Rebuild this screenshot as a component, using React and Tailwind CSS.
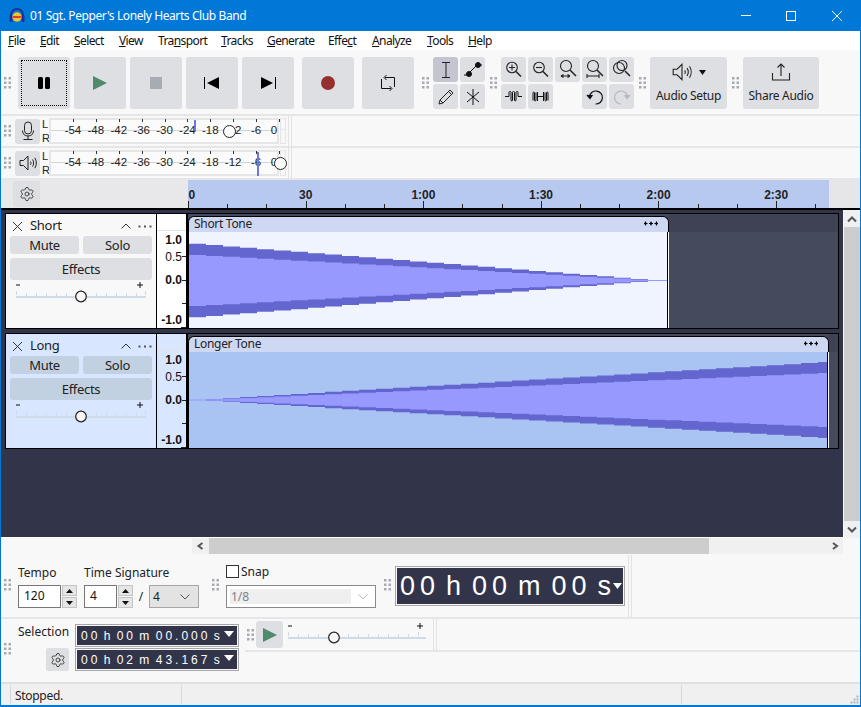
import React from "react";
import { Settings } from "lucide-react";

const sans = "font-['Noto_Sans',sans-serif]";

const Grip = ({ className = "" }) => (
  <svg width="7" height="12" viewBox="0 0 7 12" className={`shrink-0 ${className}`} fill="#a9a9b2">
    <rect x="0" y="0" width="2.5" height="2.5" />
    <rect x="4.5" y="0" width="2.5" height="2.5" />
    <rect x="0" y="4.5" width="2.5" height="2.5" />
    <rect x="4.5" y="4.5" width="2.5" height="2.5" />
    <rect x="0" y="9" width="2.5" height="2.5" />
    <rect x="4.5" y="9" width="2.5" height="2.5" />
  </svg>
);

const Cross = ({ size = 9, color = "#222" }) => (
  <svg width={size} height={size} viewBox="0 0 10 10" fill="none" stroke={color} className="shrink-0">
    <path d="M0 0l10 10M10 0L0 10" />
  </svg>
);

const BigButton = ({ children, focused }) => (
  <div className="w-[52px] h-[52px] rounded-[3px] bg-[#dedfe3] flex items-center justify-center relative shrink-0">
    {focused && <div className="absolute inset-[3px] border border-dotted border-black" />}
    {children}
  </div>
);

const SmallButton = ({ children, active }) => (
  <div className={`w-[25px] h-[25px] rounded-[3px] flex items-center justify-center ${active ? "bg-[#c3c6d0]" : "bg-[#dedfe3]"}`}>
    {children}
  </div>
);

const Glass = ({ children }) => (
  <svg width="21" height="21" viewBox="0 0 21 21" fill="none" stroke="#222" strokeWidth="1.1">
    <circle cx="9" cy="8.5" r="5.3" />
    <path d="M13 12.5l5 5" strokeWidth="1.5" />
    {children}
  </svg>
);

const Speaker = ({ size = 20 }) => (
  <svg width={size} height={size} viewBox="0 0 20 20" fill="none" stroke="#222" strokeWidth="1">
    <path d="M2 7.500h3.500L10 3v14l-4.500-4.500H2z" />
    <path d="M12.500 8.500c.7 1 .7 2.200 0 3.200M14.600 6.500c1.300 2 1.300 5 0 7M16.800 4.800c2 3 2 7.400 0 10.400" />
  </svg>
);

const Menu = () => {
  const items = [
    ["", "F", "ile", 32],
    ["", "E", "dit", 34],
    ["", "S", "elect", 45],
    ["", "V", "iew", 39],
    ["Tra", "n", "sport", 63],
    ["", "T", "racks", 46],
    ["", "G", "enerate", 61],
    ["Effe", "c", "t", 44],
    ["", "A", "nalyze", 55],
    ["", "T", "ools", 41],
    ["", "H", "elp", 40],
  ];
  return (
    <div className="h-[19px] bg-white flex items-center pl-[7px] text-[12px] text-[#111] shrink-0">
      {items.map(([a, b, c, w]) => (
        <span key={a + b + c} style={{ width: w }} className="shrink-0 tracking-[-0.6px]">
          {a}
          <span className="underline">{b}</span>
          {c}
        </span>
      ))}
    </div>
  );
};

const MainToolbar = () => (
  <div className="h-[66px] border-b-2 border-[#e6e6e8] shrink-0 pt-[7px]">
    <div className="h-[52px] flex items-center pl-[3px]">
      <Grip />
      <div className="flex gap-[4px] ml-[7px]">
        <BigButton focused>
          <svg width="14" height="14" viewBox="0 0 14 14" fill="#000">
            <rect x="1" y="1" width="5" height="12" rx="1.500" />
            <rect x="8" y="1" width="5" height="12" rx="1.500" />
          </svg>
        </BigButton>
        <BigButton>
          <svg width="16" height="16" viewBox="0 0 16 16" fill="#4f8a6b"><path d="M1 1l14 7-14 7z" /></svg>
        </BigButton>
        <BigButton>
          <div className="w-[12px] h-[12px] bg-[#a7abb3]" />
        </BigButton>
        <BigButton>
          <svg width="16" height="14" viewBox="0 0 16 14" fill="#000"><rect x="0" y="1" width="1" height="12" /><path d="M15 1v12L3 7z" /></svg>
        </BigButton>
        <BigButton>
          <svg width="16" height="14" viewBox="0 0 16 14" fill="#000"><rect x="15" y="1" width="1" height="12" /><path d="M1 1v12l12-6z" /></svg>
        </BigButton>
      </div>
      <div className="flex gap-[8px] ml-[8px]">
        <BigButton>
          <div className="w-[14px] h-[14px] rounded-full bg-[#963030]" />
        </BigButton>
        <BigButton>
          <svg width="16" height="18" viewBox="0 0 16 18" fill="none" stroke="#111" strokeWidth="1">
            <path d="M5 3.500H14.500V13M11 14.500H1.500V5" />
            <path d="M6.500 1L4 3.500 6.500 6M9.500 12l2.500 2.500L9.500 17" />
          </svg>
        </BigButton>
      </div>
      <Grip className="ml-[8px]" />
      <div className="grid grid-cols-2 gap-[2px] ml-[4px]">
        <SmallButton active>
          <svg width="12" height="20" viewBox="0 0 12 20" fill="none" stroke="#222" strokeWidth="1"><path d="M2 2.500h8M2 17.500h8M6 2.500v15" /></svg>
        </SmallButton>
        <SmallButton>
          <svg width="22" height="18" viewBox="0 0 22 18" fill="none" stroke="#111"><path d="M2 14h3l10-10h5" /><circle cx="7" cy="13" r="2.500" fill="#111" /><circle cx="16" cy="4" r="2.500" fill="#111" /></svg>
        </SmallButton>
        <SmallButton>
          <svg width="18" height="18" viewBox="0 0 18 18" fill="none" stroke="#222"><path d="M2 16l1-4L13 2l3 3L6 15zM11.500 3.500l3 3M3 12l3 3" /></svg>
        </SmallButton>
        <SmallButton>
          <svg width="16" height="16" viewBox="0 0 16 16" fill="none" stroke="#111"><path d="M8 0v16M2 3l12 10M14 3L2 13" /></svg>
        </SmallButton>
      </div>
      <Grip className="ml-[5px]" />
      <div className="grid grid-cols-5 gap-[2px] ml-[4px]">
        <SmallButton><Glass><path d="M6 8.500h6M9 5.500v6" /></Glass></SmallButton>
        <SmallButton><Glass><path d="M6 8.500h6" /></Glass></SmallButton>
        <SmallButton>
          <svg width="23" height="23" viewBox="0 0 23 23" fill="none" stroke="#222" strokeWidth="1.100"><circle cx="10" cy="8" r="5.500" /><path d="M14 12l6 6" strokeWidth="1.500" /><path d="M5 18h9M5 18l2.500-1.500M5 18l2.500 1.500M14 18l-2.500-1.500M14 18l-2.500 1.500" /></svg>
        </SmallButton>
        <SmallButton>
          <svg width="23" height="23" viewBox="0 0 23 23" fill="none" stroke="#222" strokeWidth="1.100"><circle cx="10" cy="8" r="5.500" /><path d="M14 12l6 6" strokeWidth="1.500" /><path d="M4 16v4M16 16v4M4 18h12" /></svg>
        </SmallButton>
        <SmallButton>
          <svg width="23" height="23" viewBox="0 0 23 23" fill="none" stroke="#222" strokeWidth="1.100"><circle cx="9" cy="10" r="5.500" /><circle cx="12" cy="7.500" r="5" /><path d="M15 13l5 5" strokeWidth="1.500" /></svg>
        </SmallButton>
        <SmallButton>
          <svg width="17" height="15" viewBox="0 0 17 15" fill="none" stroke="#111"><path d="M0 7.500h4M13 7.500h4" /><path d="M4 7.500V3.500a1 1 0 0 1 2 0v8a1 1 0 0 0 1.500 0v-8a1 1 0 0 1 2 0v8a1 1 0 0 0 1.500 0v-8a1 1 0 0 1 2 0v4" /></svg>
        </SmallButton>
        <SmallButton>
          <svg width="17" height="15" viewBox="0 0 17 15" fill="none" stroke="#111"><path d="M1 3.500a1 1 0 0 1 1.500 0v8a1 1 0 0 0 1.500 0v-8M1 3.500v8M5.500 3v9M5.500 7.500h6M11.500 3v9M13 3.500v8a1 1 0 0 0 1.500 0v-8a1 1 0 0 1 1.500 0v8" /></svg>
        </SmallButton>
        <div />
        <SmallButton>
          <svg width="18" height="18" viewBox="0 0 18 18" fill="none" stroke="#111" strokeWidth="1.200"><path d="M3.500 8.500A6.500 6.500 0 1 1 9.500 16" /><path d="M1 7l3 3.500L6.500 7" fill="#111" /></svg>
        </SmallButton>
        <SmallButton>
          <svg width="18" height="18" viewBox="0 0 18 18" fill="none" stroke="#b9b9bd" strokeWidth="1.200"><path d="M14.500 8.500A6.500 6.500 0 1 0 8.500 16" /><path d="M17 7l-3 3.500L11.500 7" fill="#b9b9bd" /></svg>
        </SmallButton>
      </div>
      <Grip className="ml-[5px]" />
      <div className="w-[77px] h-[52px] rounded-[3px] bg-[#dedfe3] ml-[4px] flex flex-col items-center">
        <div className="flex items-center gap-[6px] mt-[4px] h-[22px]">
          <Speaker size={22} />
          <svg width="7" height="5" viewBox="0 0 7 5" fill="#111"><path d="M0 0h7L3.500 5z" /></svg>
        </div>
        <div className="text-[12px] text-[#222] mt-[4px] whitespace-nowrap tracking-[-0.3px]">Audio Setup</div>
      </div>
      <Grip className="ml-[5px]" />
      <div className="w-[76px] h-[52px] rounded-[3px] bg-[#dedfe3] ml-[4px] flex flex-col items-center">
        <svg width="20" height="20" viewBox="0 0 20 20" fill="none" stroke="#222" strokeWidth="1.100" className="mt-[5px]">
          <path d="M1.500 11v7h17v-7M10 14V2M6.500 5.500L10 2l3.500 3.500" />
        </svg>
        <div className="text-[12px] text-[#222] mt-[5px] whitespace-nowrap tracking-[-0.3px]">Share Audio</div>
      </div>
    </div>
  </div>
);

const scale = ["-54", "-48", "-42", "-36", "-30", "-24", "-18", "-12", "-6", "0"];

const Meter = ({ children, Icon }) => (
  <div className="h-[32px] flex items-center pl-[3px] border-b-2 border-[#e6e6e8] shrink-0">
    <Grip />
    <div className="w-[25px] h-[25px] rounded-[3px] bg-[#dedfe3] ml-[4px] flex items-center justify-center shrink-0">
      <Icon />
    </div>
    <div className="w-[7px] ml-[2px] flex flex-col text-[11px] leading-[14px] text-[#222] font-['Liberation_Sans',sans-serif]">
      <span>L</span>
      <span>R</span>
    </div>
    <div className="relative w-[230px] h-[26px] border-2 border-[#e6e6e8] bg-[#fbfbfb]">
      <div className="absolute left-0 right-0 top-[10px] h-[1px] bg-[#d4d4d6]" />
      <div className="absolute inset-0 flex pl-[10.5px] items-center font-['Liberation_Sans',sans-serif] text-[11.5px] text-[#222]">
        {scale.map((s) => (
          <span key={s} className={`w-[22.9px] shrink-0 text-center ${s === "0" ? "-translate-x-[5px]" : ""}`}>{s}</span>
        ))}
      </div>
      <div className="absolute inset-x-0 top-[-1px] pl-[22px] flex">
        {scale.map((s) => (
          <span key={s} className="w-[22.9px] shrink-0"><span className="block w-[1px] h-[3px] bg-[#333]" /></span>
        ))}
      </div>
      {children}
    </div>
    <div className="w-[6px] h-[26px] ml-[1px] border border-[#e6e6e8] flex flex-col">
      <div className="h-[11px] border-b border-[#e6e6e8]" />
    </div>
    <div className="w-[4px] h-[32px] ml-[2px] border-x border-[#e2e2e4]" />
  </div>
);

const Mic = () => (
  <svg width="18" height="20" viewBox="0 0 18 20" fill="none" stroke="#222" strokeWidth="1">
    <rect x="5.500" y="1" width="7" height="12" rx="3.500" />
    <path d="M3.500 9.500c0 3.500 2 5.500 5.500 5.500s5.500-2 5.500-5.500M9 15v3M4.500 18.500h9" />
  </svg>
);

const TimeRuler = () => {
  const ticks = Array.from({ length: 17 }, (_, i) => i);
  return (
    <div className="h-[30px] flex shrink-0 border-b-2 border-black">
      <div className="w-[187px] bg-[#e8e8ea] pl-[12px] pt-[1px]">
        <div className="w-[27px] h-[26px] rounded-[3px] bg-[#dedfe3] flex items-center justify-center">
          <Settings size={16} strokeWidth={1.2} color="#222" />
        </div>
      </div>
      <div className="relative w-[641px] bg-[#b8c9f0] flex font-['Liberation_Sans',sans-serif] font-bold text-[12px] text-[#222] pt-[6px]">
        <span className="w-[59px] pl-[0.5px] shrink-0">0</span>
        {["30", "1:00", "1:30", "2:00"].map((t) => (
          <span key={t} className="w-[117.6px] text-center shrink-0">{t}</span>
        ))}
        <span className="flex-1 text-center pl-[6px]">2:30</span>
        <svg width="641" height="28" className="absolute left-0 top-0" stroke="#222">
          {ticks.map((i) => (
            <path key={i} d={`M${Math.round(i * 39.2) + 0.5} ${i % 3 === 0 ? 21 : 24}V28`} />
          ))}
        </svg>
      </div>
      <div className="flex-1 bg-[#e6e6e8]" />
    </div>
  );
};

const Dots = ({ color = "#333", plus }) => (
  <svg width="14" height="5" viewBox="0 0 14 5" fill={color} className="shrink-0">
    {[1.5, 7, 12.5].map((x) => (
      <g key={x}>
        <rect x={x - 1} y="1.500" width="2" height="2" />
        {plus && <rect x={x - 2} y="2" width="4" height="1" />}
        {plus && <rect x={x - 0.5} y="0.500" width="1" height="4" />}
      </g>
    ))}
  </svg>
);

const Slider = ({ width = 130, thumb = 65, color = "#cfdbe8" }) => {
  const ticks = Array.from({ length: 14 }, (_, i) => i);
  return (
    <svg width={width} height="24" viewBox={`0 0 ${width} 24`} className="shrink-0">
      <path d="M0 3h4" stroke="#111" />
      <path d={`M${width - 9} 3h6M${width - 6} 0v6`} stroke="#111" />
      <rect x="0" y="14" width={width} height="2" fill={color} />
      {ticks.map((i) => (
        <rect key={i} x={Math.min(i * 10, width - 1)} y={i === 0 || i === 13 ? 9 : 11} width="1" height="4" fill={color} />
      ))}
      <circle cx={thumb} cy="14.500" r="5.300" fill="#f8f8f8" stroke="#222" strokeWidth="1.200" />
    </svg>
  );
};

const envelope = (width, fn, step = 17) => {
  const top = [];
  const bottom = [];
  for (let x = 0; x < width; x += step) {
    const end = Math.min(x + step, width);
    const h = fn(x + step / 2);
    top.push(`${x},${-h}`, `${end},${-h}`);
    bottom.unshift(`${end},${h}`, `${x},${h}`);
  }
  return [...top, ...bottom].join(" ");
};

const Wave = ({ width, outer, inner, center }) => (
  <svg width={width} height="96" className="absolute left-0 top-0">
    <g transform={`translate(0 ${center})`}>
      <polygon points={envelope(width, outer)} fill="#6466d0" />
      <polygon points={envelope(width, inner)} fill="#9899ff" />
      <rect x="0" y="-0.500" width={width} height="1" fill="#9899ff" />
    </g>
  </svg>
);

const TrackButton = ({ children, className }) => (
  <div className={`rounded-[3px] flex items-center justify-center pt-[2px] text-[13px] text-[#222] tracking-[-0.3px] ${className}`}>{children}</div>
);

const Track = ({ name, clip, selected, clipWidth, outer, inner, center }) => {
  const btn = selected ? "bg-[#c2d1e2]" : "bg-[#dedfe3]";
  return (
    <div className="h-[116px] w-[834px] ml-[4px] border border-black flex bg-[#454a5d]">
      <div className={`w-[151px] border-r border-black px-[4px] shrink-0 ${selected ? "bg-[#d9e6ff]" : "bg-[#f8f8f8]"}`}>
        <div className="h-[22px] flex items-center pl-[3px] pt-[2px] text-[13px] text-[#222]">
          <Cross />
          <span className="ml-[8px] tracking-[-0.3px]">{name}</span>
          <svg width="10" height="6" viewBox="0 0 10 6" fill="none" stroke="#333" className="ml-auto mr-[7px]"><path d="M.5 5.500L5 1l4.500 4.500" /></svg>
          <Dots color="#555" />
        </div>
        <div className="flex gap-[4px]">
          <TrackButton className={`w-[69px] h-[18px] ${btn}`}>Mute</TrackButton>
          <TrackButton className={`w-[69px] h-[18px] ${btn}`}>Solo</TrackButton>
        </div>
        <TrackButton className={`h-[22px] mt-[4px] ${btn}`}>Effects</TrackButton>
        <div className="mt-[2px] pl-[6px]"><Slider /></div>
      </div>
      <div className={`w-[31px] border-r-2 border-black shrink-0 flex flex-col ${selected ? "bg-[#d9e6ff]" : "bg-white"}`}>
        <div className="h-[17px] border-b border-[#e2e2e4] shrink-0" />
        <div className="flex-1 relative pt-[1px] text-[12px] leading-[16px] text-right pr-[4px] font-['Liberation_Sans',sans-serif] text-[#111]">
          <div className="font-bold">1.0</div>
          <div className="mt-[1px]">0.5</div>
          <div className="mt-[7px] font-bold">0.0</div>
          <div className="mt-[24px] font-bold">-1.0</div>
          <svg width="5" height="98" className="absolute right-0 top-0" stroke="#222">
            <path d="M1 25.500h4M1 49.500h4M1 72.500h4M0 96.500h5" />
          </svg>
        </div>
      </div>
      <div className="pt-[2px] shrink-0 flex flex-col" style={{ width: clipWidth }}>
        <div className="h-[16px] rounded-t-[6px] border-t border-l border-r border-black bg-[#cfd8f3] flex items-center justify-between pl-[5px] pr-[10px] pb-[2px] text-[12px] text-[#222] shrink-0">
          <span className="tracking-[-0.3px]">{clip}</span>
          <Dots color="#000" plus />
        </div>
        <div className="h-[96px] border-r border-white">
          <div className={`relative h-full border-x border-black ${selected ? "bg-[#a9c3f2]" : "bg-[#f0f4ff]"}`}>
            <Wave width={clipWidth - 3} outer={outer} inner={inner} center={center} />
          </div>
        </div>
      </div>
      <div className="flex-1">
        <div className="h-[18px] bg-[#3f4154]" />
      </div>
    </div>
  );
};

const Chevron = ({ d, className }) => (
  <svg width="10" height="8" viewBox="0 0 10 8" fill="none" stroke="#555" strokeWidth="2" className={className}><path d={d} /></svg>
);

const TrackArea = () => (
  <div className="flex h-[328px] shrink-0">
    <div className="w-[842px] bg-[#32354a] pt-[3px] flex flex-col gap-[4px] border-b border-white">
      <Track
        name="Short"
        clip="Short Tone"
        clipWidth={481}
        outer={(x) => Math.max(37.5 * (1 - x / 468), 0)}
        inner={(x) => Math.max(26 * (1 - x / 468), 0)}
        center={48.5}
      />
      <Track
        selected
        name="Long"
        clip="Longer Tone"
        clipWidth={641}
        outer={(x) => Math.max((38 * (x - 10)) / 629, 0)}
        inner={(x) => Math.max((27 * (x - 10)) / 629, 0)}
        center={48}
      />
    </div>
    <div className="w-[16px] ml-[1px] bg-[#f0f0f0] flex flex-col items-center shrink-0">
      <div className="h-[17px] flex items-center"><Chevron d="M1 6.500l4-4 4 4" /></div>
      <div className="flex-1 w-full bg-[#cdcdcd]" />
      <div className="h-[17px] flex items-center"><Chevron d="M1 1.500l4 4 4-4" /></div>
    </div>
  </div>
);

const HScroll = () => (
  <div className="h-[17px] flex pl-[191px] shrink-0">
    <div className="w-[651px] bg-[#f0f0f0] flex items-center h-[16px]">
      <div className="w-[17px] flex justify-center"><Chevron d="M6.500 1l-4 3 4 3" /></div>
      <div className="w-[500px] h-full bg-[#cdcdcd]" />
      <div className="ml-auto w-[17px] flex justify-center"><Chevron d="M3 1l4 3-4 3" /></div>
    </div>
  </div>
);

const Spin = () => (
  <div className="w-[15px] h-[23px] flex flex-col gap-[1px] ml-[1px]">
    {["M0 4L3.500 0 7 4z", "M0 0h7L3.500 4z"].map((d) => (
      <div key={d} className="flex-1 bg-[#e6e6e6] border border-[#c4c4c4] flex items-center justify-center">
        <svg width="7" height="4" viewBox="0 0 7 4" fill="#111"><path d={d} /></svg>
      </div>
    ))}
  </div>
);

const Caret = ({ color = "#555" }) => (
  <svg width="10" height="6" viewBox="0 0 10 6" fill="none" stroke={color}><path d="M.5.5L5 5 9.500.5" /></svg>
);

const Clock = ({ text }) => (
  <div className="w-[164px] h-[23px] border border-[#a6a6aa] p-[1px]">
    <div className="h-full bg-[#32354a] flex items-center justify-between pl-[4px] pr-[3px] text-white font-['Liberation_Sans',sans-serif] text-[12px] tracking-[3px] [word-spacing:-3px] whitespace-pre">
      <span>{text}</span>
      <svg width="10" height="6" viewBox="0 0 10 6" fill="#fff" className="mb-[4px] -ml-[3px]"><path d="M0 0h10L5 6z" /></svg>
    </div>
  </div>
);

const TimeToolbar = () => (
  <div className="h-[64px] flex pl-[3px] border-b-2 border-[#e6e6e8] shrink-0 text-[12px] text-[#222]">
    <Grip className="self-center -mt-[2px]" />
    <div className="ml-[7px] pt-[9px]">
      <div className="h-[21px]">Tempo</div>
      <div className="flex">
        <div className="w-[43px] h-[23px] border border-[#777] bg-white pl-[5px] leading-[20px] text-[#111]">120</div>
        <Spin />
      </div>
    </div>
    <div className="ml-[7px] pt-[9px]">
      <div className="h-[21px] whitespace-nowrap">Time Signature</div>
      <div className="flex items-center">
        <div className="w-[33px] h-[23px] border border-[#777] bg-white pl-[5px] leading-[20px] text-[#111]">4</div>
        <Spin />
        <span className="w-[16px] text-center">/</span>
        <div className="w-[50px] h-[23px] border border-[#a6a6a6] bg-[#e3e3e3] pl-[3px] pr-[8px] flex items-center justify-between">
          <span>4</span>
          <Caret />
        </div>
      </div>
    </div>
    <Grip className="self-center ml-[13px] -mt-[2px]" />
    <div className="ml-[7px] pt-[10px] w-[150px]">
      <div className="h-[20px] flex items-start">
        <div className="w-[13px] h-[13px] border border-[#333] bg-white" />
        <span className="ml-[2px] leading-[13px]">Snap</span>
      </div>
      <div className="h-[23px] border border-[#8a8a8a] bg-white p-[3px] flex items-center">
        <div className="flex-1 h-full bg-[#efefef] pl-[1px] text-[#808088] leading-[15px]">1/8</div>
        <span className="ml-[7px] mr-[4px]"><Caret color="#bbb" /></span>
      </div>
    </div>
    <Grip className="self-center ml-[8px] -mt-[2px]" />
    <div className="w-[230px] h-[40px] ml-[4px] mt-[11px] border border-[#a6a6aa] p-[1px]">
      <div className="h-full bg-[#32354a] flex items-center justify-between pl-[3px] pr-[1px] text-white font-['Liberation_Sans',sans-serif] text-[27px] tracking-[5px] [word-spacing:-6.500px] whitespace-pre">
        <span>00 h 00 m 00 s</span>
        <svg width="9" height="6" viewBox="0 0 9 6" fill="#fff" className="-ml-[5px] shrink-0"><path d="M0 0h9L4.500 6z" /></svg>
      </div>
    </div>
    <div className="w-[4px] ml-[3px] border-x border-[#e2e2e4]" />
  </div>
);

const SelectionToolbar = () => (
  <div className="h-[65px] flex pl-[3px] shrink-0 text-[12px] text-[#222] border-b-2 border-[#e0e0e0]">
    <Grip className="self-center -mt-[3px]" />
    <div className="ml-[7px] w-[57px] shrink-0 flex flex-col pt-[4px]">
      <div className="h-[25px]">Selection</div>
      <div className="w-[23px] h-[23px] ml-[28px] bg-[#dedfe3] rounded-[2px] flex items-center justify-center">
        <Settings size={16} strokeWidth={1.2} color="#222" />
      </div>
    </div>
    <div className="flex flex-col gap-[1px] pt-[5px]">
      <Clock text="00 h 00 m 00.000 s" />
      <Clock text="00 h 02 m 43.167 s" />
    </div>
    <div className="flex-1 ml-[6px]">
      <div className="h-[33px] border-b-2 border-[#e6e6e8] flex items-center pl-[2px]">
        <Grip />
        <div className="w-[27px] h-[27px] ml-[2px] rounded-[3px] bg-[#dedfe3] flex items-center justify-center">
          <svg width="16" height="16" viewBox="0 0 16 16" fill="#4f8a6b"><path d="M1 1l14 7-14 7z" /></svg>
        </div>
        <div className="ml-[5px]"><Slider width={138} thumb={46} /></div>
        <div className="w-[4px] h-[31px] ml-[7px] border-x border-[#e2e2e4]" />
      </div>
    </div>
  </div>
);

const StatusBar = () => (
  <div className="h-[21px] bg-[#f0f0f0] flex text-[12px] text-[#222] relative shrink-0">
    <div className="w-[10px] border-r border-[#d8d8d8] my-[1px]" />
    <div className="w-[171px] border-r border-[#d8d8d8] pl-[4px] my-[1px] leading-[21px] tracking-[-0.3px]">Stopped.</div>
    <div className="w-[500px] border-r border-[#d8d8d8] my-[1px]" />
    <svg width="9" height="9" viewBox="0 0 9 9" fill="#b5b5b5" className="absolute right-[1px] bottom-[1px]">
      <rect x="6.500" y="0.500" width="2" height="2" />
      <rect x="3.500" y="3.500" width="2" height="2" />
      <rect x="6.500" y="3.500" width="2" height="2" />
      <rect x="0.500" y="6.500" width="2" height="2" />
      <rect x="3.500" y="6.500" width="2" height="2" />
      <rect x="6.500" y="6.500" width="2" height="2" />
    </svg>
  </div>
);

export default function App() {
  return (
    <div className={`w-[861px] h-[707px] overflow-hidden bg-[#f8f8f8] border-x border-b-2 border-[#0078d7] flex flex-col ${sans}`}>
      <div className="h-[31px] bg-[#0078d7] flex items-center text-white text-[12px] shrink-0">
        <svg width="16" height="15" viewBox="0 0 16 15" className="ml-[8px] shrink-0">
          <path d="M2 10V7a6 6 0 0 1 12 0v3" fill="none" stroke="#17329c" strokeWidth="2" />
          <rect x="0.500" y="7" width="3" height="7" rx="1.500" fill="#17329c" />
          <rect x="12.500" y="7" width="3" height="7" rx="1.500" fill="#17329c" />
          <circle cx="8" cy="9" r="4.700" fill="#f2c230" />
          <path d="M3.500 8h9v2h-9z" fill="#e2412c" />
        </svg>
        <span className="ml-[5px] tracking-[-0.4px] whitespace-nowrap">01 Sgt. Pepper's Lonely Hearts Club Band</span>
        <div className="ml-auto flex items-center">
          <div className="w-[10px] h-[1px] bg-white mr-[35px]" />
          <div className="w-[10px] h-[10px] border border-white mr-[36px]" />
          <span className="mr-[18px]"><Cross size={10} color="#fff" /></span>
        </div>
      </div>
      <Menu />
      <MainToolbar />
      <Meter Icon={Mic}>
        <div className="absolute left-[143px] top-[0px] w-[2px] h-[11px] bg-[#6a78e0]" />
        <div className="absolute left-[172px] top-[4.500px] w-[13px] h-[13px] rounded-full border border-[#222] bg-[#fbfbfb]" />
      </Meter>
      <Meter Icon={Speaker}>
        <div className="absolute left-[206px] top-[0px] w-[2px] h-[24px] bg-[#6a78e0]" />
        <div className="absolute left-[223px] top-[4.500px] w-[13px] h-[13px] rounded-full border border-[#222] bg-[#fbfbfb]" />
      </Meter>
      <TimeRuler />
      <TrackArea />
      <HScroll />
      <TimeToolbar />
      <SelectionToolbar />
      <StatusBar />
    </div>
  );
}
